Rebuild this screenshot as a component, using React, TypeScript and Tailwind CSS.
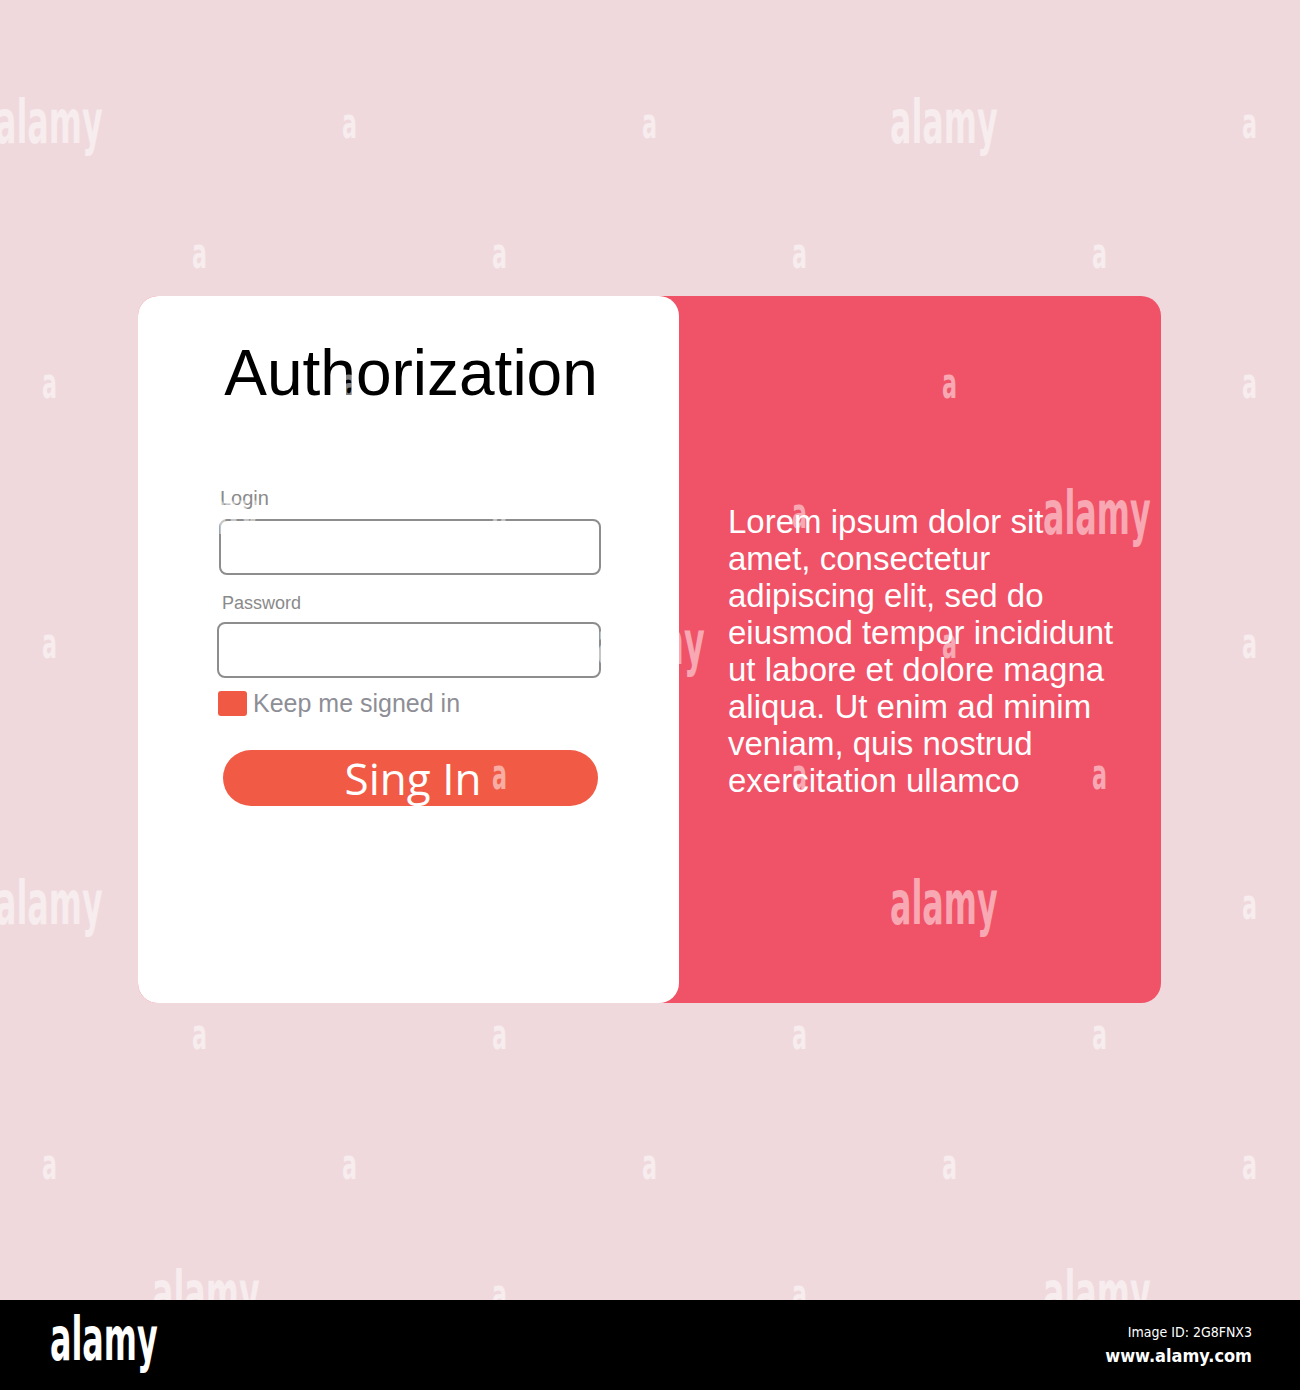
import React from "react";

const bigMarks: [number, number][] = [
  [-5, 92],
  [890, 92],
  [152, 483],
  [1043, 483],
  [597, 613],
  [-5, 873],
  [890, 873],
  [152, 1263],
  [1043, 1263],
];

const smallRows: [number, number[]][] = [
  [116, [342, 642, 1242]],
  [246, [192, 492, 792, 1092]],
  [376, [42, 342, 642, 942, 1242]],
  [506, [492, 792]],
  [636, [42, 342, 942, 1242]],
  [767, [192, 492, 792, 1092]],
  [897, [342, 642, 1242]],
  [1027, [192, 492, 792, 1092]],
  [1157, [42, 342, 642, 942, 1242]],
  [1287, [492, 792]],
];

function Watermarks() {
  return (
    <div className="pointer-events-none absolute left-0 top-0 h-[1300px] w-[1300px] overflow-hidden">
      {bigMarks.map(([x, y], i) => (
        <span
          key={"b" + i}
          className="absolute origin-top-left scale-x-[0.53] text-[60px] font-bold leading-none text-white/50"
          style={{ left: x, top: y, fontFamily: '"DejaVu Sans", sans-serif' }}
        >
          alamy
        </span>
      ))}
      {smallRows.flatMap(([y, xs]) =>
        xs.map((x) => (
          <span
            key={"s" + x + "-" + y}
            className="absolute origin-top-left scale-x-[0.53] text-[42px] font-bold leading-none text-white/50"
            style={{ left: x, top: y - 13, fontFamily: '"DejaVu Sans", sans-serif' }}
          >
            a
          </span>
        ))
      )}
    </div>
  );
}

export default function App() {
  return (
    <div
      className="relative h-[1390px] w-[1300px] overflow-hidden"
      style={{ fontFamily: '"Liberation Sans", Arial, sans-serif' }}
    >
      <div className="h-[1300px] bg-[#efd9dd] pl-[138px] pt-[296px]">
        <div className="flex h-[707px] w-[1023px] rounded-[20px] bg-[#f05267]">
          <div className="flex h-full w-[541px] flex-col rounded-[20px] bg-white pt-[45px]">
            <h1 className="pl-[5px] text-center text-[64px] leading-none text-black">
              Authorization
            </h1>
            <div className="mt-[83px] flex flex-col pl-[81px]">
              <label className="pl-[1px] text-[20px] leading-none text-[#8a8a8a]">Login</label>
              <div className="mt-[11px] h-[56px] w-[382px] rounded-[8px] border-2 border-[#8d8d8d]" />
              <label className="mt-[19px] pl-[3px] text-[18px] leading-none text-[#8a8a8a]">
                Password
              </label>
              <div className="-ml-[2px] mt-[10px] h-[56px] w-[384px] rounded-[8px] border-2 border-[#8d8d8d]" />
              <div className="-ml-[1px] mt-[13px] flex items-center gap-[6px]">
                <span className="h-[25px] w-[29px] rounded-[3px] bg-[#f05a45]" />
                <span className="text-[25px] leading-none text-[#8e8e96]">Keep me signed in</span>
              </div>
              <button
                className="ml-[4px] mt-[34px] flex h-[56px] w-[375px] items-center justify-center rounded-full bg-[#f15a45] pl-[5px] text-[44px] leading-none text-white"
                style={{ fontFamily: '"Open Sans", sans-serif' }}
              >
                Sing In
              </button>
            </div>
          </div>
          <div className="flex flex-1 items-center pl-[49px]">
            <p className="mt-[2px] text-[33px] leading-[37px] text-white">
              Lorem ipsum dolor sit
              <br />
              amet, consectetur
              <br />
              adipiscing elit, sed do
              <br />
              eiusmod tempor incididunt
              <br />
              ut labore et dolore magna
              <br />
              aliqua. Ut enim ad minim
              <br />
              veniam, quis nostrud
              <br />
              exercitation ullamco
            </p>
          </div>
        </div>
      </div>
      <Watermarks />
      <div className="relative flex h-[90px] items-center justify-between bg-black pl-[50px] pr-[48px]">
        <span
          className="-mt-[12px] w-[110px] origin-left scale-x-[0.53] text-[60px] font-bold leading-none text-white"
          style={{ fontFamily: '"DejaVu Sans", sans-serif' }}
        >
          alamy
        </span>
        <div
          className="flex flex-col items-end text-white"
          style={{ fontFamily: '"DejaVu Sans Condensed", "DejaVu Sans", sans-serif', fontStretch: "condensed" }}
        >
          <span className="text-[14px] leading-none">Image ID: 2G8FNX3</span>
          <span className="mt-[8px] text-[18px] font-bold leading-none">www.alamy.com</span>
        </div>
      </div>
    </div>
  );
}
